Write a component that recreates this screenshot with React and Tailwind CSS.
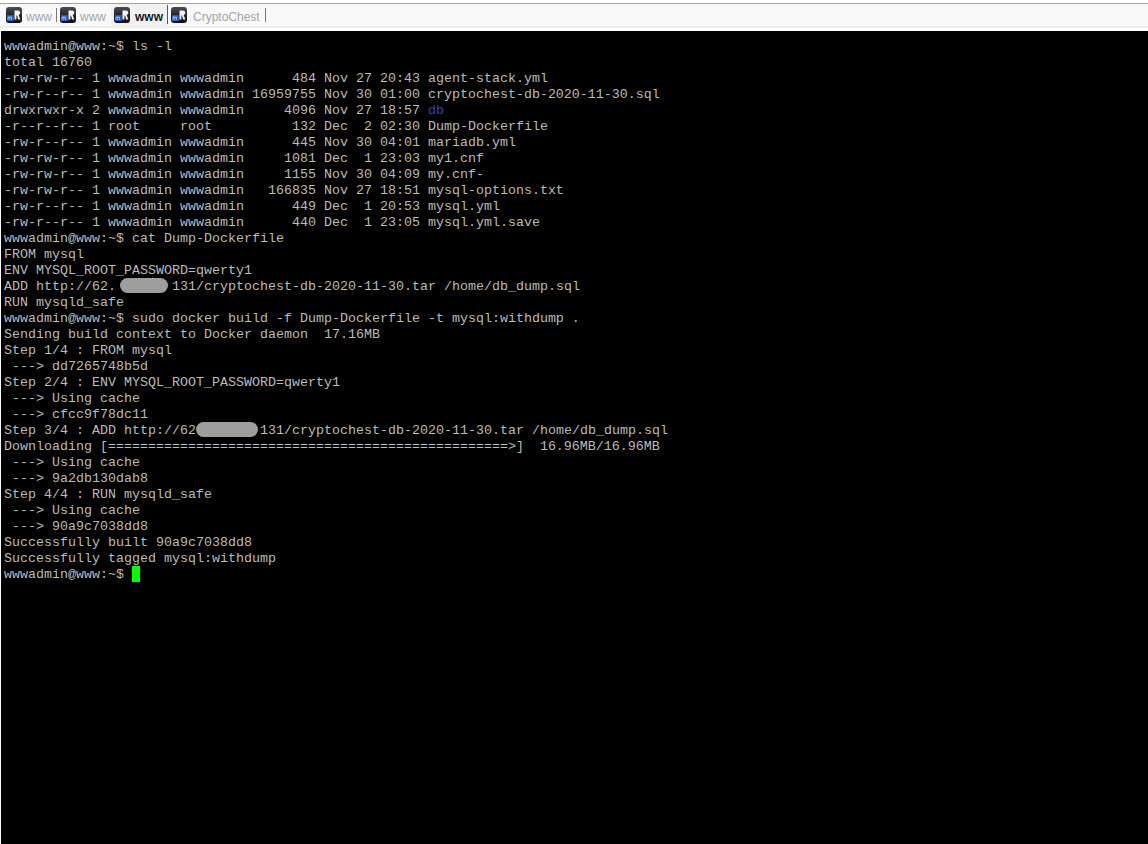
const listing = [
  ['-rw-rw-r-- 1 wwwadmin wwwadmin      484 Nov 27 20:43 agent-stack.yml'],
  ['-rw-r--r-- 1 wwwadmin wwwadmin 16959755 Nov 30 01:00 cryptochest-db-2020-11-30.sql'],
  ['drwxrwxr-x 2 wwwadmin wwwadmin     4096 Nov 27 18:57 ', 'db'],
  ['-r--r--r-- 1 root     root          132 Dec  2 02:30 Dump-Dockerfile'],
  ['-rw-r--r-- 1 wwwadmin wwwadmin      445 Nov 30 04:01 mariadb.yml'],
  ['-rw-rw-r-- 1 wwwadmin wwwadmin     1081 Dec  1 23:03 my1.cnf'],
  ['-rw-rw-r-- 1 wwwadmin wwwadmin     1155 Nov 30 04:09 my.cnf-'],
  ['-rw-rw-r-- 1 wwwadmin wwwadmin   166835 Nov 27 18:51 mysql-options.txt'],
  ['-rw-r--r-- 1 wwwadmin wwwadmin      449 Dec  1 20:53 mysql.yml'],
  ['-rw-r--r-- 1 wwwadmin wwwadmin      440 Dec  1 23:05 mysql.yml.save'],
];

function Blur({ className }) {
  return <span className={`inline-block h-[15px] -translate-y-px align-top rounded-full bg-[#9e9e9e] ${className}`} />;
}

function AppIcon() {
  return (
    <svg width="16" height="16" viewBox="0 0 16 16" className="shrink-0">
      <defs>
        <linearGradient id="iconBg" x1="0" y1="0" x2="0" y2="1">
          <stop offset="0" stopColor="#4a4d55" />
          <stop offset="0.5" stopColor="#24262c" />
          <stop offset="1" stopColor="#111216" />
        </linearGradient>
      </defs>
      <rect width="16" height="16" rx="3" fill="url(#iconBg)" />
      <rect x="1" y="8" width="7" height="6" fill="#1a55d8" />
      <path d="M2 13v-3h3.6v3M3.8 10v3" stroke="#cfe0ff" strokeWidth="0.7" fill="none" />
      <path d="M8.5 12.5V3.5h3.6a2.3 2.3 0 0 1 .6 4.5l1.6 4.5h-2.1L11 8.4h-.6v4.1z" fill="#f2f2f2" />
    </svg>
  );
}

function Separator({ dark }) {
  return <span className={`w-px shrink-0 ${dark ? 'h-[19px] bg-[#555]' : 'h-[14px] bg-[#777]'}`} />;
}

function Tab({ label, active, className }) {
  return (
    <div className={`flex h-[22px] items-center ${active ? 'bg-[#f0f0f0]' : ''} ${className}`}>
      <AppIcon />
      <span className={`mt-[5px] font-['Liberation_Sans',sans-serif] text-[12px] leading-[16px] ${active ? 'font-bold text-[#10182a]' : 'text-[#a2a6ad]'}`}>
        {label}
      </span>
    </div>
  );
}

export default function App() {
  return (
    <div className="flex h-[844px] w-[1148px] flex-col overflow-hidden bg-white">
      <div className="h-[3px] bg-white" />
      <div className="flex h-[23px] items-center border-t border-[#a0a0a0] bg-[#f8f8f8] pb-[1px]">
        <Tab label="www" className="gap-[4px] pl-[6px] pr-[4px]" />
        <Separator />
        <Tab label="www" className="gap-[4px] pl-[3px] pr-[5px]" />
        <Tab label="www" active className="gap-[5px] pl-[3px] pr-[4px]" />
        <Separator dark />
        <Tab label="CryptoChest" className="gap-[6px] pl-[3px] pr-[5px]" />
        <Separator />
      </div>
      <div className="h-[2px] bg-[#ececec]" />
      <div className="h-[3px] bg-white" />
      <div className="ml-px flex-1 bg-black pl-[3px] pt-[8px] font-['Liberation_Mono','Courier_New',monospace] text-[13.33px] leading-[16px] text-[#bbbbbb] whitespace-pre">
        <div>wwwadmin@www:~$ ls -l</div>
        <div>total 16760</div>
        {listing.map((row) => (
          <div key={row[0]}>
            {row[0]}
            {row[1] && <span className="text-[#3a3ad8]">{row[1]}</span>}
          </div>
        ))}
        <div>wwwadmin@www:~$ cat Dump-Dockerfile</div>
        <div>FROM mysql</div>
        <div>ENV MYSQL_ROOT_PASSWORD=qwerty1</div>
        <div className="h-[16px]">
          ADD http://62.<Blur className="ml-[4px] mr-[4px] w-[48px]" />131/cryptochest-db-2020-11-30.tar /home/db_dump.sql
        </div>
        <div>RUN mysqld_safe</div>
        <div>wwwadmin@www:~$ sudo docker build -f Dump-Dockerfile -t mysql:withdump .</div>
        <div>Sending build context to Docker daemon  17.16MB</div>
        <div>Step 1/4 : FROM mysql</div>
        <div> ---&gt; dd7265748b5d</div>
        <div>Step 2/4 : ENV MYSQL_ROOT_PASSWORD=qwerty1</div>
        <div> ---&gt; Using cache</div>
        <div> ---&gt; cfcc9f78dc11</div>
        <div className="h-[16px]">
          Step 3/4 : ADD http://62<Blur className="mr-[2px] w-[62px]" />131/cryptochest-db-2020-11-30.tar /home/db_dump.sql
        </div>
        <div>Downloading [==================================================&gt;]  16.96MB/16.96MB</div>
        <div> ---&gt; Using cache</div>
        <div> ---&gt; 9a2db130dab8</div>
        <div>Step 4/4 : RUN mysqld_safe</div>
        <div> ---&gt; Using cache</div>
        <div> ---&gt; 90a9c7038dd8</div>
        <div>Successfully built 90a9c7038dd8</div>
        <div>Successfully tagged mysql:withdump</div>
        <div className="flex">
          <span>wwwadmin@www:~$ </span>
          <span className="-mt-px h-[16px] w-[8px] bg-[#00ff00]" />
        </div>
      </div>
    </div>
  );
}
